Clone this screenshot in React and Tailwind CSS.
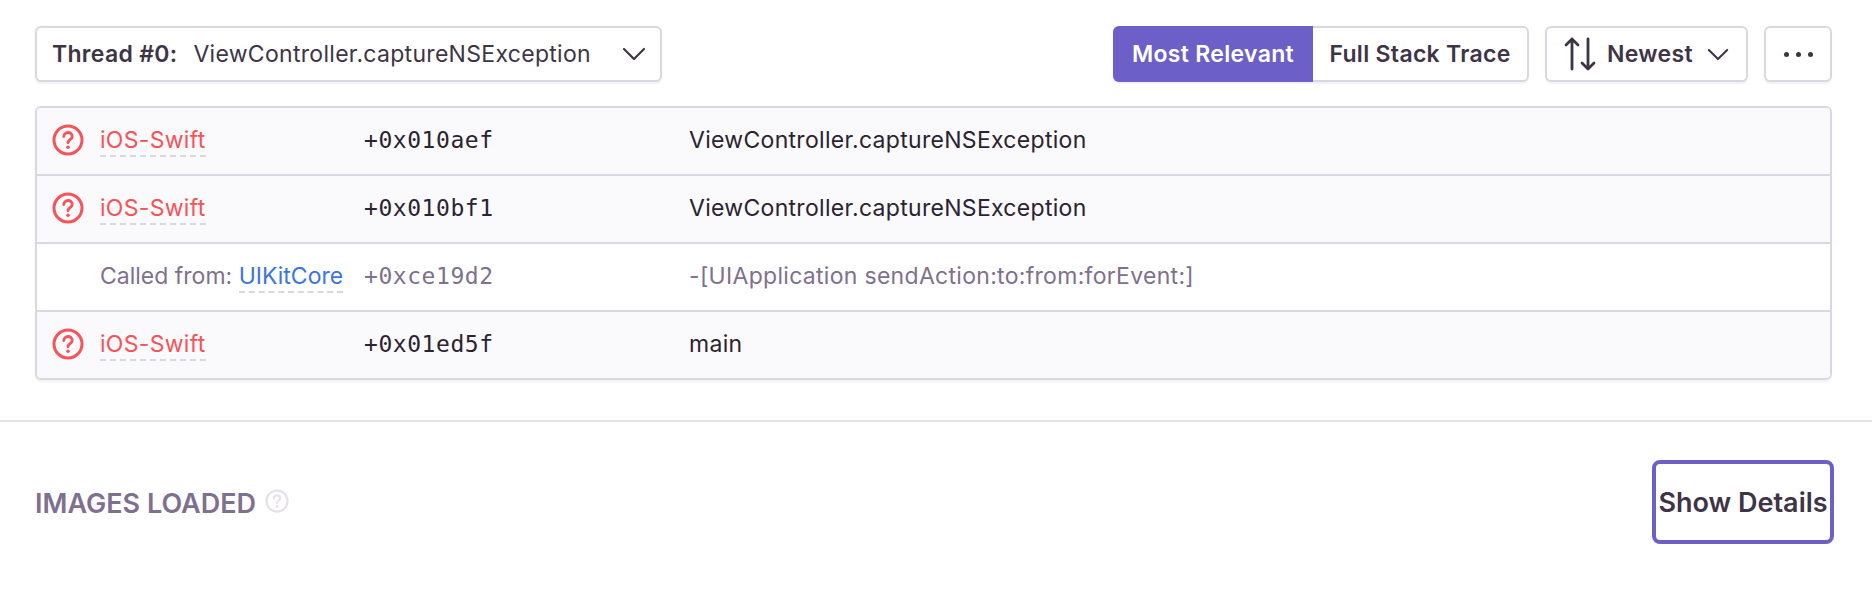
const sans = "font-['Inter','Liberation_Sans',sans-serif]";
const mono = "font-['DejaVu_Sans_Mono',monospace]";

function QuestionIcon({ className }) {
  return (
    <svg viewBox="0 0 32 32" fill="none" className={className}>
      <circle cx="16" cy="16" r="14" stroke="currentColor" strokeWidth="3" />
      <path
        d="M11.8 12.6c0-2.4 1.900-4.100 4.200-4.100s4.200 1.600 4.200 3.900c0 3.200-4.200 3.400-4.200 6.400"
        stroke="currentColor"
        strokeWidth="2.8"
        strokeLinecap="round"
      />
      <circle cx="16" cy="23.200" r="1.800" fill="currentColor" />
    </svg>
  );
}

function Chevron({ className }) {
  return (
    <svg viewBox="0 0 24 14" fill="none" className={className}>
      <path d="M2 2l10 10L22 2" stroke="currentColor" strokeWidth="2.200" strokeLinecap="round" strokeLinejoin="round" />
    </svg>
  );
}

function Frame({ pkg, addr, fn, called, last }) {
  return (
    <div
      className={`flex items-center pb-[2px] ${last ? "h-[66px]" : "h-[68px] border-b-2 border-[#dbd6e1]"} ${called ? "bg-white" : "bg-[#faf9fb]"}`}
    >
      <div className="w-[63px] pl-[15px] shrink-0">
        {!called && <QuestionIcon className="w-[32px] h-[32px] text-[#f55459]" />}
      </div>
      <div className="w-[264px] shrink-0 whitespace-nowrap">
        {called && <span className="text-[#80708f] tracking-normal">Called from: </span>}
        <span
          className={`border-b-2 border-dashed border-[#dbd6e1] pb-[1px] ${called ? "text-[#3d74db] tracking-normal" : "text-[#f55459]"}`}
        >
          {pkg}
        </span>
      </div>
      <div className={`w-[325px] shrink-0 ${mono} text-[23px] tracking-[0.55px] ${called ? "text-[#80708f]" : "text-[#2b2233]"}`}>
        {addr}
      </div>
      <div className={called ? "text-[#80708f]" : "text-[#2b2233]"}>{fn}</div>
    </div>
  );
}

export default function App() {
  return (
    <div className={`w-[1872px] h-[590px] bg-white overflow-hidden text-[#3e3446] text-[23px] tracking-[0.3px] ${sans}`}>
      <div className="pl-[35px] pr-[40px] pt-[26px] pb-[40px] border-b-2 border-[#e7e1ec]">
        <div className="flex items-center justify-between mb-[24px]">
          <button className="flex items-center h-[56px] w-[627px] pl-[15px] pr-[14px] bg-white border-2 border-[#dbd6e1] rounded-[6px] shadow-[0_2px_2px_rgba(43,34,51,0.06)]">
            <span className="font-semibold mr-[16px]">Thread #0:</span>
            <span className="flex-1 text-left whitespace-nowrap">ViewController.captureNSException</span>
            <Chevron className="w-[24px] h-[14px]" />
          </button>
          <div className="flex items-center gap-[16px]">
            <div className="flex h-[56px] rounded-[6px] shadow-[0_2px_2px_rgba(43,34,51,0.06)] font-semibold">
              <button className="w-[200px] bg-[#6c5fc7] text-white rounded-l-[6px]">Most Relevant</button>
              <button className="w-[216px] bg-white border-2 border-l-0 border-[#dbd6e1] rounded-r-[6px]">Full Stack Trace</button>
            </div>
            <button className="flex items-center h-[56px] w-[203px] pl-[17px] bg-white border-2 border-[#dbd6e1] rounded-[6px] shadow-[0_2px_2px_rgba(43,34,51,0.06)] font-semibold">
              <svg viewBox="0 0 32 34" className="w-[32px] h-[34px] mr-[11px]" fill="none" stroke="currentColor" strokeWidth="2.800" strokeLinecap="round" strokeLinejoin="round">
                <path d="M8 32V2M2 8l6-6 6 6" />
                <path d="M24 2v30M18 26l6 6 6-6" />
              </svg>
              <span>Newest</span>
              <Chevron className="w-[22px] h-[13px] ml-[14px]" />
            </button>
            <button className="flex items-center justify-center gap-[7px] h-[56px] w-[68px] bg-white border-2 border-[#dbd6e1] rounded-[6px] shadow-[0_2px_2px_rgba(43,34,51,0.06)]">
              <span className="w-[5px] h-[5px] rounded-full bg-[#3e3446]" />
              <span className="w-[5px] h-[5px] rounded-full bg-[#3e3446]" />
              <span className="w-[5px] h-[5px] rounded-full bg-[#3e3446]" />
            </button>
          </div>
        </div>
        <div className="border-2 border-[#dbd6e1] rounded-[6px] overflow-hidden shadow-[0_2px_2px_rgba(43,34,51,0.06)]">
          <Frame pkg="iOS-Swift" addr="+0x010aef" fn="ViewController.captureNSException" />
          <Frame pkg="iOS-Swift" addr="+0x010bf1" fn="ViewController.captureNSException" />
          <Frame called pkg="UIKitCore" addr="+0xce19d2" fn="-[UIApplication sendAction:to:from:forEvent:]" />
          <Frame last pkg="iOS-Swift" addr="+0x01ed5f" fn="main" />
        </div>
      </div>
      <div className="flex items-center justify-between pl-[35px] pr-[38px] pt-[38px]">
        <div className="flex items-center gap-[9px]">
          <h3 className="text-[27px] font-semibold text-[#80708f] leading-none tracking-normal pt-[3px]">IMAGES LOADED</h3>
          <QuestionIcon className="w-[24px] h-[24px] mb-[2px] text-[#e7e1ec]" />
        </div>
        <button className="w-[182px] h-[84px] border-[4px] border-[#6c5fc7] rounded-[8px] bg-white text-[27px] font-semibold tracking-normal whitespace-nowrap flex items-center justify-center pt-[2px]">
          Show Details
        </button>
      </div>
    </div>
  );
}
